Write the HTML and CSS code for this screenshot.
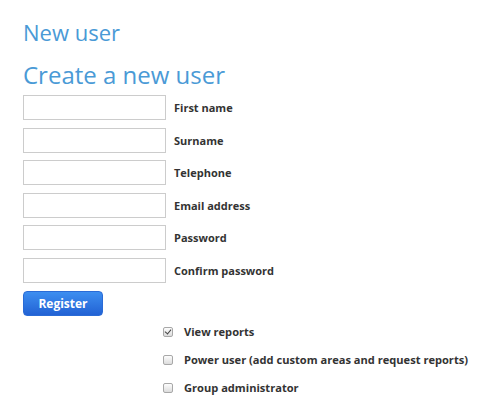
FILE: index.html
```html
<!DOCTYPE html>
<html lang="en">
<head>
    <meta charset="UTF-8">
    <meta name="viewport" content="width=device-width, initial-scale=1.0">
    <title>New user</title>
    <link rel="stylesheet" href="styles.css">
</head>
<body>

<div class="page">
    <h1 class="page-title">New user</h1>
    <h2 class="section-title">Create a new user</h2>

    <form class="user-form">
        <div class="field">
            <input type="text" id="firstname">
            <label for="firstname">First name</label>
        </div>
        <div class="field">
            <input type="text" id="surname">
            <label for="surname">Surname</label>
        </div>
        <div class="field">
            <input type="text" id="telephone">
            <label for="telephone">Telephone</label>
        </div>
        <div class="field">
            <input type="text" id="email">
            <label for="email">Email address</label>
        </div>
        <div class="field">
            <input type="password" id="password">
            <label for="password">Password</label>
        </div>
        <div class="field">
            <input type="password" id="confirm">
            <label for="confirm">Confirm password</label>
        </div>

        <button type="button" class="btn-register">Register</button>

        <div class="roles">
            <label class="role"><input type="checkbox" checked> View reports</label>
            <label class="role"><input type="checkbox"> Power user (add custom areas and request reports)</label>
            <label class="role"><input type="checkbox"> Group administrator</label>
        </div>
    </form>
</div>

</body>
</html>
```

FILE: styles.css
```css
body {
    font-family: 'Open Sans', 'Noto Sans', sans-serif;
    margin: 0;
    background: #fff;
    color: #333;
}
.page {
    padding: 18px 23px;
}
.page-title, .section-title {
    font-weight: normal;
    color: #4a9ad6;
    margin: 0;
}
.page-title {
    font-size: 22px;
    line-height: 28px;
}
.section-title {
    font-size: 24px;
    line-height: 30px;
    margin-top: 14px;
}
.user-form {
    margin-top: 5px;
}
.field {
    display: flex;
    align-items: center;
    gap: 8px;
    margin-bottom: 7.6px;
}
.field input {
    box-sizing: border-box;
    width: 143px;
    height: 25px;
    padding: 0 4px;
    border: 1px solid #ccc;
    font-size: 12px;
}
.field label {
    font-size: 11px;
    font-weight: bold;
    color: #333;
}
.btn-register {
    display: block;
    width: 80px;
    height: 25px;
    border: 1px solid #2a6bd6;
    border-radius: 4px;
    background: linear-gradient(#3d8ef0, #2262d4);
    color: #fff;
    font-family: inherit;
    font-size: 12px;
    font-weight: bold;
    cursor: pointer;
}
.roles {
    margin-top: 2px;
    padding-left: 140px;
}
.role {
    display: flex;
    align-items: center;
    height: 28px;
    font-size: 11.1px;
    font-weight: bold;
}
/* grey old-style checkbox */
.role input {
    appearance: none;
    -webkit-appearance: none;
    box-sizing: border-box;
    width: 10px;
    height: 10px;
    margin: 0 11px 0 0;
    border: 1px solid #a8a8a8;
    border-radius: 2px;
    background: linear-gradient(#fdfdfd, #dcdcdc);
    position: relative;
}
.role input:checked::after {
    content: "";
    position: absolute;
    left: 2px;
    top: 0px;
    width: 3px;
    height: 5px;
    border: solid #444;
    border-width: 0 1.5px 1.5px 0;
    transform: rotate(40deg);
}
```
